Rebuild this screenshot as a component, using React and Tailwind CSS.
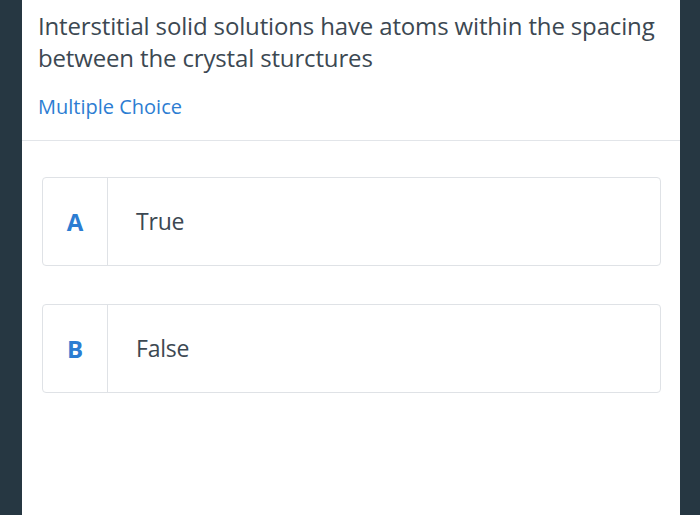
import React from 'react'

const OPTIONS = [
  { key: 'A', text: 'True' },
  { key: 'B', text: 'False' },
]

export default function App() {
  return (
    <div className="flex h-[515px] w-[700px] bg-[#263742]" style={{ fontFamily: '"Open Sans", "Noto Sans", sans-serif' }}>
      <div className="ml-[22px] mr-[20px] flex-1 bg-white">
        <div className="border-b border-[#e2e5e9] pl-[16px] pt-[10px] pb-[19px]">
          <p className="text-[24px] leading-[32px] tracking-[-0.15px] text-[#3c4852]">
            Interstitial solid solutions have atoms within the spacing between the crystal sturctures
          </p>
          <p className="mt-[19px] text-[20px] leading-[28px] text-[#2c7dd2]">Multiple Choice</p>
        </div>
        <div className="flex flex-col gap-[38px] pl-[20px] pr-[19px] pt-[36px]">
          {OPTIONS.map(o => (
            <div key={o.key} className="flex h-[89px] rounded-[4px] border border-[#dfe2e6]">
              <div className="flex w-[65px] items-center justify-center border-r border-[#dfe2e6] text-[24px] font-bold text-[#2c7dd2]">
                {o.key}
              </div>
              <div className="flex items-center pl-[28px] text-[23px] tracking-[-0.2px] text-[#3c4852]">{o.text}</div>
            </div>
          ))}
        </div>
      </div>
    </div>
  )
}
